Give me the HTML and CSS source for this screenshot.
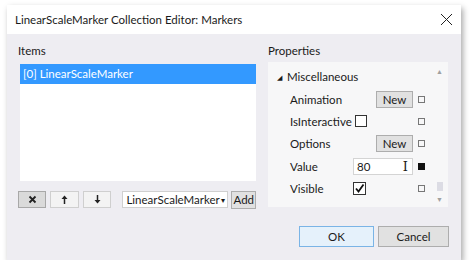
FILE: index.html
```html
<!DOCTYPE html>
<html lang="en">
<head>
  <meta charset="UTF-8">
  <title>LinearScaleMarker Collection Editor: Markers</title>
  <link rel="stylesheet" href="styles.css">
</head>
<body>

  <div class="dialog">
    <div class="titlebar">
      <span class="title">LinearScaleMarker Collection Editor: Markers</span>
      <svg class="close" width="13" height="13" viewBox="0 0 13 13">
        <path d="M1 1 L12 12 M12 1 L1 12" stroke="#222" stroke-width="1" fill="none"/>
      </svg>
    </div>

    <div class="content">
      <div class="panes">
        <div class="items">
          <div class="label">Items</div>
          <div class="list">
            <div class="list-row selected">[0] LinearScaleMarker</div>
          </div>
          <div class="toolbar">
            <button class="btn tool active">
              <svg width="9" height="9" viewBox="0 0 9 9"><path d="M1.5 1.5 L7.5 7.5 M7.5 1.5 L1.5 7.5" stroke="#222" stroke-width="1.8"/></svg>
            </button>
            <button class="btn tool">
              <svg width="9" height="9" viewBox="0 0 9 9"><path d="M4.5 2 V9" stroke="#222" stroke-width="1.5"/><path d="M1.5 4 L4.5 0.5 L7.5 4 Z" fill="#222"/></svg>
            </button>
            <button class="btn tool">
              <svg width="9" height="9" viewBox="0 0 9 9"><path d="M4.5 0 V7" stroke="#222" stroke-width="1.5"/><path d="M1.5 5 L4.5 8.5 L7.5 5 Z" fill="#222"/></svg>
            </button>
            <div class="combo">LinearScaleMarker<span class="caret">&#x25BE;</span></div>
            <button class="btn add">Add</button>
          </div>
        </div>

        <div class="props">
          <div class="label">Properties</div>
          <div class="grid">
            <div class="rows">
              <div class="category"><span class="tri">&#x25E2;</span>Miscellaneous</div>
              <div class="prop">
                <span class="name">Animation</span>
                <span class="value right"><button class="btn new">New</button></span>
                <span class="mark"></span>
              </div>
              <div class="prop">
                <span class="name">IsInteractive</span>
                <span class="value"><span class="check"></span></span>
                <span class="mark"></span>
              </div>
              <div class="prop">
                <span class="name">Options</span>
                <span class="value right"><button class="btn new">New</button></span>
                <span class="mark"></span>
              </div>
              <div class="prop">
                <span class="name">Value</span>
                <span class="value"><span class="input">80<span class="ibeam">I</span></span></span>
                <span class="mark set"></span>
              </div>
              <div class="prop">
                <span class="name">Visible</span>
                <span class="value">
                  <span class="check on">
                    <svg width="11" height="11" viewBox="0 0 11 11"><path d="M2 5.5 L4.5 8.5 L9.5 1.5" stroke="#111" stroke-width="1.8" fill="none"/></svg>
                  </span>
                </span>
                <span class="mark"></span>
              </div>
            </div>
            <div class="scroll">
              <span class="arrow">&#x25B2;</span>
              <span class="thumb"></span>
              <span class="arrow">&#x25BC;</span>
            </div>
          </div>
        </div>
      </div>

      <div class="actions">
        <button class="btn ok">OK</button>
        <button class="btn cancel">Cancel</button>
      </div>
    </div>
  </div>

</body>
</html>
```

FILE: styles.css
```css
    body {
      margin: 0;
      background: #fff;
      font-family: Lato, "Noto Sans", sans-serif;
      font-size: 11.5px;
      color: #1a1a1a;
    }

    .dialog {
      margin: 5px 0 0 7px;
      width: 454px;
      height: 255px;
      display: flex;
      flex-direction: column;
      box-shadow: 2px 3px 6px rgba(0, 0, 0, 0.35);
    }

    .titlebar {
      height: 29px;
      background: #fff;
      display: flex;
      align-items: center;
      justify-content: space-between;
      padding: 0 8px 0 8px;
    }

    .close {
      display: block;
    }

    .content {
      flex: 1;
      background: #eeedf2;
      display: flex;
      flex-direction: column;
      padding: 9px 12px 0 11px;
    }

    .panes {
      display: flex;
      gap: 12px;
    }

    .label {
      height: 16px;
      line-height: 16px;
      margin-bottom: 5px;
    }

    .items {
      width: 238px;
    }

    .list {
      margin-left: 2px;
      height: 117px;
      background: #fff;
    }

    .list-row {
      height: 20px;
      line-height: 20px;
      padding-left: 3px;
    }

    .list-row.selected {
      background: #3399ff;
      color: #fff;
    }

    .btn {
      font-family: inherit;
      font-size: 11.5px;
      color: #1a1a1a;
      background: #e1e1e1;
      border: 1px solid #adadad;
      padding: 0;
      margin: 0;
    }

    .toolbar {
      display: flex;
      align-items: center;
      margin-top: 10px;
      height: 17px;
    }

    .tool {
      width: 29px;
      height: 17px;
      margin-right: 4px;
      background: #f3f3f3;
      border-color: #cfcfcf;
      display: flex;
      align-items: center;
      justify-content: center;
    }

    .tool.active {
      background: #dadada;
      border-color: #a8a8a8;
    }

    .combo {
      margin-left: 7px;
      width: 108px;
      height: 17px;
      line-height: 16px;
      background: #fff;
      border: 1px solid #d0d0d0;
      padding-left: 3px;
      box-sizing: border-box;
      display: flex;
      justify-content: space-between;
    }

    .caret {
      font-size: 8px;
      padding-right: 2px;
    }

    .add {
      margin-left: 3px;
      width: 25px;
      height: 18px;
    }

    .props {
      width: 180px;
    }

    .grid {
      display: flex;
      height: 145px;
      background: #f7f7f8;
      margin-top: -2px;
    }

    .rows {
      flex: 1;
      padding-top: 4px;
    }

    .category {
      height: 22px;
      line-height: 22px;
      padding-left: 9px;
    }

    .tri {
      font-size: 7px;
      margin-right: 5px;
      vertical-align: 1px;
    }

    .prop {
      height: 22.3px;
      display: flex;
      align-items: center;
      padding-left: 22px;
    }

    .name {
      width: 63px;
    }

    .value {
      width: 60px;
      display: flex;
    }

    .value.right {
      justify-content: flex-end;
    }

    .new {
      width: 37px;
      height: 17px;
    }

    .check {
      width: 12px;
      height: 12px;
      margin-left: 2px;
      border: 1px solid #333;
      background: #fff;
      box-sizing: border-box;
      display: flex;
      align-items: center;
      justify-content: center;
    }

    .check.on {
      width: 13px;
      height: 13px;
      margin-left: 0;
    }

    .input {
      flex: 1;
      height: 17px;
      line-height: 16px;
      background: #fff;
      border: 1px solid #d4d4d4;
      padding-left: 3px;
      box-sizing: border-box;
      display: flex;
      justify-content: space-between;
    }

    .ibeam {
      font-family: "DejaVu Serif", serif;
      font-size: 13px;
      padding-right: 4px;
    }

    .mark {
      width: 7px;
      height: 7px;
      margin-left: 5px;
      border: 1px solid #777;
      box-sizing: border-box;
    }

    .mark.set {
      background: #111;
      border-color: #111;
    }

    .scroll {
      width: 17px;
      display: flex;
      flex-direction: column;
      align-items: center;
      padding: 5px 0 4px;
      font-size: 7px;
      color: #a0a0a0;
    }

    .thumb {
      margin-top: auto;
      width: 6px;
      height: 9px;
      background: #dcdce4;
      margin-bottom: 4px;
    }

    .actions {
      display: flex;
      justify-content: flex-end;
      gap: 4px;
      margin-top: 18px;
    }

    .ok, .cancel {
      height: 21px;
    }

    .ok {
      width: 75px;
      background: #e5f1fb;
      border-color: #7ab4e6;
    }

    .cancel {
      width: 71px;
    }
```
